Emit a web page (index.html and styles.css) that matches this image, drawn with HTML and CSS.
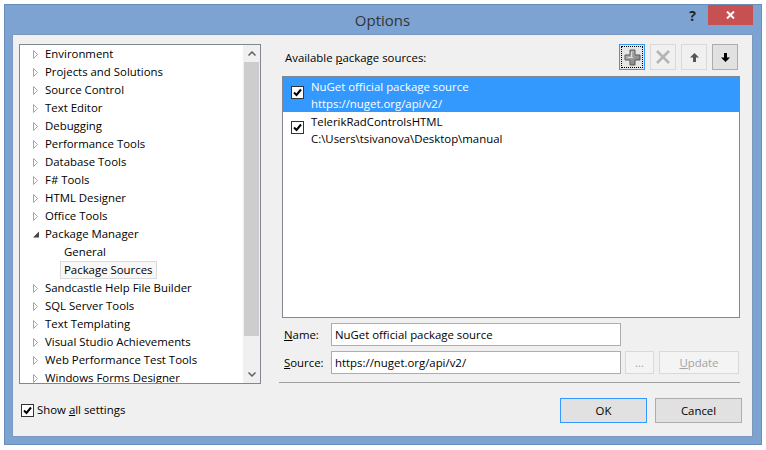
FILE: index.html
```html
<!DOCTYPE html>
<html lang="en">
<head>
  <meta charset="UTF-8" />
  <title>Options</title>
  <link rel="stylesheet" href="styles.css">
</head>
<body>
  <div class="window">
    <div class="titlebar">
      <span></span>
      <span class="title">Options</span>
      <div class="caption-buttons">
        <span class="help">?</span>
        <span class="close">
          <svg width="9" height="8" viewBox="0 0 9 8"><path d="M1 0.5 L8 7.5 M8 0.5 L1 7.5" stroke="#fff" stroke-width="2"/></svg>
        </span>
      </div>
    </div>

    <div class="client">
      <div class="left">
        <div class="tree">
          <ul class="nodes">
            <li class="node"><span class="twisty"><svg width="6" height="9"><path d="M0.5 0.5 L4.5 4.5 L0.5 8.5 Z" fill="none" stroke="#a6a6a6"/></svg></span>Environment</li>
            <li class="node"><span class="twisty"><svg width="6" height="9"><path d="M0.5 0.5 L4.5 4.5 L0.5 8.5 Z" fill="none" stroke="#a6a6a6"/></svg></span>Projects and Solutions</li>
            <li class="node"><span class="twisty"><svg width="6" height="9"><path d="M0.5 0.5 L4.5 4.5 L0.5 8.5 Z" fill="none" stroke="#a6a6a6"/></svg></span>Source Control</li>
            <li class="node"><span class="twisty"><svg width="6" height="9"><path d="M0.5 0.5 L4.5 4.5 L0.5 8.5 Z" fill="none" stroke="#a6a6a6"/></svg></span>Text Editor</li>
            <li class="node"><span class="twisty"><svg width="6" height="9"><path d="M0.5 0.5 L4.5 4.5 L0.5 8.5 Z" fill="none" stroke="#a6a6a6"/></svg></span>Debugging</li>
            <li class="node"><span class="twisty"><svg width="6" height="9"><path d="M0.5 0.5 L4.5 4.5 L0.5 8.5 Z" fill="none" stroke="#a6a6a6"/></svg></span>Performance Tools</li>
            <li class="node"><span class="twisty"><svg width="6" height="9"><path d="M0.5 0.5 L4.5 4.5 L0.5 8.5 Z" fill="none" stroke="#a6a6a6"/></svg></span>Database Tools</li>
            <li class="node"><span class="twisty"><svg width="6" height="9"><path d="M0.5 0.5 L4.5 4.5 L0.5 8.5 Z" fill="none" stroke="#a6a6a6"/></svg></span>F# Tools</li>
            <li class="node"><span class="twisty"><svg width="6" height="9"><path d="M0.5 0.5 L4.5 4.5 L0.5 8.5 Z" fill="none" stroke="#a6a6a6"/></svg></span>HTML Designer</li>
            <li class="node"><span class="twisty"><svg width="6" height="9"><path d="M0.5 0.5 L4.5 4.5 L0.5 8.5 Z" fill="none" stroke="#a6a6a6"/></svg></span>Office Tools</li>
            <li class="node"><span class="twisty"><svg width="6" height="9"><path d="M6 1.5 V7.5 H0 Z" fill="#454545"/></svg></span>Package Manager</li>
            <li class="node child"><span class="label">General</span></li>
            <li class="node child"><span class="label selected">Package Sources</span></li>
            <li class="node"><span class="twisty"><svg width="6" height="9"><path d="M0.5 0.5 L4.5 4.5 L0.5 8.5 Z" fill="none" stroke="#a6a6a6"/></svg></span>Sandcastle Help File Builder</li>
            <li class="node"><span class="twisty"><svg width="6" height="9"><path d="M0.5 0.5 L4.5 4.5 L0.5 8.5 Z" fill="none" stroke="#a6a6a6"/></svg></span>SQL Server Tools</li>
            <li class="node"><span class="twisty"><svg width="6" height="9"><path d="M0.5 0.5 L4.5 4.5 L0.5 8.5 Z" fill="none" stroke="#a6a6a6"/></svg></span>Text Templating</li>
            <li class="node"><span class="twisty"><svg width="6" height="9"><path d="M0.5 0.5 L4.5 4.5 L0.5 8.5 Z" fill="none" stroke="#a6a6a6"/></svg></span>Visual Studio Achievements</li>
            <li class="node"><span class="twisty"><svg width="6" height="9"><path d="M0.5 0.5 L4.5 4.5 L0.5 8.5 Z" fill="none" stroke="#a6a6a6"/></svg></span>Web Performance Test Tools</li>
            <li class="node"><span class="twisty"><svg width="6" height="9"><path d="M0.5 0.5 L4.5 4.5 L0.5 8.5 Z" fill="none" stroke="#a6a6a6"/></svg></span>Windows Forms Designer</li>
          </ul>
          <div class="vscroll">
            <div class="scroll-btn"><svg width="8" height="5"><path d="M0.5 4.5 L4 1 L7.5 4.5" fill="none" stroke="#606060" stroke-width="1.5"/></svg></div>
            <div class="thumb"></div>
            <div class="track"></div>
            <div class="scroll-btn"><svg width="8" height="5"><path d="M0.5 0.5 L4 4 L7.5 0.5" fill="none" stroke="#606060" stroke-width="1.5"/></svg></div>
          </div>
        </div>

        <div class="show-all">
          <span class="checkbox"><svg width="11" height="11"><path d="M2 5.5 L4.5 8 L9 2.5" fill="none" stroke="#000" stroke-width="2"/></svg></span>
          <span>Show <u>a</u>ll settings</span>
        </div>
      </div>

      <div class="right">
        <div class="sources-head">
          <span class="caption">Available <u>p</u>ackage sources:</span>
          <div class="tools">
            <span class="tool focused">
              <svg width="17" height="17" viewBox="0 0 17 17">
                <defs>
                  <linearGradient id="plusFill" x1="0" y1="0" x2="1" y2="1">
                    <stop offset="0" stop-color="#c4c4c4"/>
                    <stop offset="1" stop-color="#767676"/>
                  </linearGradient>
                </defs>
                <path d="M6 1 H11 V6 H16 V11 H11 V16 H6 V11 H1 V6 H6 Z" fill="url(#plusFill)" stroke="#595959" stroke-linejoin="round"/>
                <path d="M7.5 3 V8 M4 8.5 H9" stroke="#e0e0e0" stroke-width="1" fill="none"/>
              </svg>
            </span>
            <span class="tool disabled">
              <svg width="16" height="14" viewBox="0 0 16 14"><path d="M2 1 L14 13 M14 1 L2 13" stroke="#b4b4b4" stroke-width="2.5"/></svg>
            </span>
            <span class="tool disabled">
              <svg width="9" height="9" viewBox="0 0 9 9"><path d="M4.5 0 L9 4.5 H6 V9 H3 V4.5 H0 Z" fill="#555"/></svg>
            </span>
            <span class="tool">
              <svg width="9" height="9" viewBox="0 0 9 9"><path d="M4.5 9 L9 4.5 H6 V0 H3 V4.5 H0 Z" fill="#000"/></svg>
            </span>
          </div>
        </div>

        <div class="source-list">
          <div class="source selected">
            <span class="checkbox"><svg width="11" height="11"><path d="M2 5.5 L4.5 8 L9 2.5" fill="none" stroke="#000" stroke-width="2"/></svg></span>
            <div class="source-text">
              <div>NuGet official package source</div>
              <div>https://nuget.org/api/v2/</div>
            </div>
          </div>
          <div class="source">
            <span class="checkbox"><svg width="11" height="11"><path d="M2 5.5 L4.5 8 L9 2.5" fill="none" stroke="#000" stroke-width="2"/></svg></span>
            <div class="source-text">
              <div>TelerikRadControlsHTML</div>
              <div>C:\Users\tsivanova\Desktop\manual</div>
            </div>
          </div>
        </div>

        <div class="field-row">
          <span class="field-label"><u>N</u>ame:</span>
          <span class="textbox">NuGet official package source</span>
        </div>
        <div class="field-row">
          <span class="field-label"><u>S</u>ource:</span>
          <span class="textbox">https://nuget.org/api/v2/</span>
          <span class="button browse disabled">...</span>
          <span class="button update disabled"><u>U</u>pdate</span>
        </div>

        <div class="separator"></div>

        <div class="actions">
          <span class="button default">OK</span>
          <span class="button">Cancel</span>
        </div>
      </div>
    </div>
  </div>
</body>
</html>
```

FILE: styles.css
```css
body {
  margin: 0;
  padding: 4px 4px 0 4px;
  width: 766px;
  height: 450px;
  box-sizing: border-box;
  overflow: hidden;
  background: #fff;
  font-family: "Open Sans", "Liberation Sans", sans-serif;
  font-size: 11.4px;
  color: #000;
}

.window {
  width: 758px;
  height: 441px;
  box-sizing: border-box;
  border: 1px solid #6a8ebc;
  background: #7ca3d1;
  padding: 0 8px 7px 7px;
  display: flex;
  flex-direction: column;
}

.titlebar {
  height: 29px;
  display: grid;
  grid-template-columns: 1fr auto 1fr;
  align-items: start;
}

.title {
  font-size: 15px;
  line-height: 20px;
  padding-top: 5px;
  color: #333;
}

.caption-buttons {
  justify-self: end;
  display: flex;
  align-items: flex-start;
}

.help {
  font-size: 14px;
  font-weight: bold;
  line-height: 20px;
  color: #222;
  margin-right: 12px;
  padding-top: 1px;
}

.close {
  width: 45px;
  height: 20px;
  background: #c75050;
  display: flex;
  align-items: center;
  justify-content: center;
}

.client {
  flex: 1;
  display: flex;
  background: #f0f0f0;
  border: 1px solid #7b98bf;
  padding: 9px 10px 0 6px;
}

/* left side: category tree */
.left {
  width: 242px;
  display: flex;
  flex-direction: column;
}

.tree {
  height: 340px;
  box-sizing: border-box;
  border: 1px solid #828790;
  background: #fff;
  display: flex;
  overflow: hidden;
}

.nodes {
  flex: 1;
  list-style: none;
  margin: 0;
  padding: 0;
  overflow: hidden;
}

.node {
  height: 18px;
  line-height: 18px;
  display: flex;
  align-items: center;
  padding-left: 13px;
  white-space: nowrap;
}

.twisty {
  width: 12px;
  display: flex;
  align-items: center;
}

.node.child {
  padding-left: 40px;
}

.label {
  height: 18px;
  line-height: 16px;
  box-sizing: border-box;
  border: 1px solid transparent;
  padding: 0 3px;
}

.label.selected {
  border-color: #dadada;
  background: #f7f7f7;
}

.vscroll {
  width: 17px;
  background: #f0f0f0;
  display: flex;
  flex-direction: column;
}

.scroll-btn {
  height: 17px;
  display: flex;
  align-items: center;
  justify-content: center;
}

.thumb {
  height: 274px;
  margin: 0 1px;
  background: #cdcdcd;
}

.track {
  flex: 1;
}

.show-all {
  margin-top: 18px;
  margin-left: 2px;
  display: flex;
  align-items: center;
  gap: 3px;
  line-height: 16px;
}

.checkbox {
  width: 13px;
  height: 13px;
  box-sizing: border-box;
  border: 1px solid #333;
  background: #fff;
  display: flex;
  align-items: center;
  justify-content: center;
  flex-shrink: 0;
}

/* right side: package sources */
.right {
  margin-left: 18px;
  width: 463px;
  display: flex;
  flex-direction: column;
}

.sources-head {
  height: 26px;
  display: flex;
  align-items: center;
}

.caption {
  flex: 1;
  padding-left: 6px;
}

.tools {
  display: flex;
  gap: 5px;
  padding-right: 4px;
}

.tool {
  width: 26px;
  height: 26px;
  box-sizing: border-box;
  border: 1px solid #adadad;
  background: #e1e1e1;
  display: flex;
  align-items: center;
  justify-content: center;
  position: relative;
}

.tool.disabled {
  border-color: #d9d9d9;
  background: #f0f0f0;
}

.tool.focused {
  border-color: #3399ff;
  background: #e5e5e5;
}

.tool.focused::after {
  content: "";
  position: absolute;
  inset: 1px;
  border: 1px dotted #000;
}

.source-list {
  margin: 6px 2px 0 3px;
  height: 242px;
  box-sizing: border-box;
  border: 1px solid #828790;
  background: #fff;
}

.source {
  height: 35px;
  box-sizing: border-box;
  padding: 1px 0 0 8px;
  display: flex;
  align-items: flex-start;
}

.source .checkbox {
  margin-top: 8px;
}

.source.selected {
  background: #3399ff;
  color: #fff;
}

.source-text {
  margin-left: 7px;
  line-height: 17px;
}

.field-row {
  margin-top: 5px;
  display: flex;
  align-items: center;
}

.field-label {
  width: 52px;
  box-sizing: border-box;
  padding-left: 5px;
}

.textbox {
  width: 290px;
  height: 23px;
  box-sizing: border-box;
  border: 1px solid #abadb3;
  background: #fff;
  padding: 0 3px;
  line-height: 21px;
}

.button {
  height: 25px;
  width: 87px;
  box-sizing: border-box;
  border: 1px solid #adadad;
  background: #e1e1e1;
  display: flex;
  align-items: center;
  justify-content: center;
}

.button.default {
  border-color: #3399ff;
}

.button.disabled {
  border-color: #d9d9d9;
  background: #f4f4f4;
  color: #a3a3a3;
}

.button.browse {
  width: 29px;
  height: 23px;
  margin-left: 4px;
}

.button.update {
  width: 80px;
  height: 23px;
  margin-left: 5px;
}

.separator {
  margin-top: 8px;
  width: 461px;
  border-top: 1px solid #a0a0a0;
}

.actions {
  margin-top: 15px;
  display: flex;
  justify-content: flex-end;
  gap: 8px;
}
```
